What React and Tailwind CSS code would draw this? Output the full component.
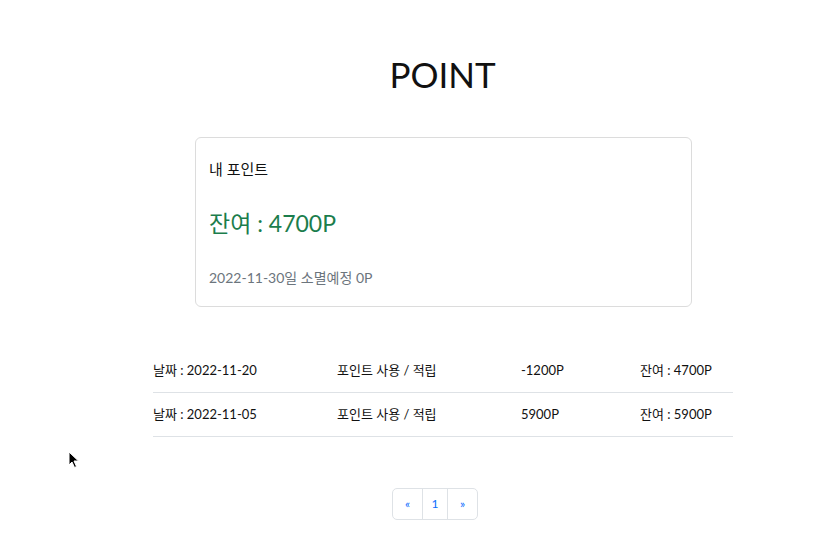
import React from 'react'

const ROWS = [
  { date: '2022-11-20', amount: '-1200P', balance: '4700P' },
  { date: '2022-11-05', amount: '5900P', balance: '5900P' },
]

const FONT = { fontFamily: 'Lato, "Noto Sans CJK KR", sans-serif' }

export default function App() {
  return (
    <div className="relative w-[837px] h-[555px] bg-white text-[#111] overflow-hidden" style={FONT}>
      <h1 className="pt-[52px] ml-[48px] text-center text-[35px] leading-[44px] font-normal">
        POINT
      </h1>

      {/* balance card */}
      <div className="mt-[41px] ml-[195px] w-[497px] h-[170px] rounded-[6px] border border-[#dcdcdc] px-[13px] pt-[20px]">
        <div className="text-[15px] leading-[22px]">내 포인트</div>
        <div className="mt-[27px] text-[23px] leading-[32px] text-[#1b7d4c]">잔여 : 4700P</div>
        <div className="mt-[29px] text-[14px] leading-[20px] text-[#6c757d]">2022-11-30일 소멸예정 0P</div>
      </div>

      {/* history */}
      <div className="mt-[42px] ml-[153px] w-[580px]">
        {ROWS.map(r => (
          <div key={r.date} className="grid grid-cols-[184px_184px_119px_1fr] h-[44px] items-center border-b border-[#dee2e6] text-[13px]">
            <span>날짜 : {r.date}</span>
            <span>포인트 사용 / 적립</span>
            <span>{r.amount}</span>
            <span>잔여 : {r.balance}</span>
          </div>
        ))}
      </div>

      {/* pagination */}
      <div className="mt-[51px] ml-[392px] flex w-max rounded-[5px] border border-[#dee2e6] text-[12px] text-[#0d6efd]">
        <span className="w-[29px] h-[30px] flex items-center justify-center">«</span>
        <span className="w-[26px] h-[30px] flex items-center justify-center border-x border-[#dee2e6]">1</span>
        <span className="w-[29px] h-[30px] flex items-center justify-center">»</span>
      </div>

      {/* mouse pointer */}
      <svg className="absolute left-[68px] top-[451px]" width="12" height="18" viewBox="0 0 12 18">
        <path d="M1 1 L1 14 L4 11 L6.5 16.5 L8.5 15.5 L6 10 L10.5 10 Z" fill="#000" stroke="#fff" strokeWidth="1" />
      </svg>
    </div>
  )
}
